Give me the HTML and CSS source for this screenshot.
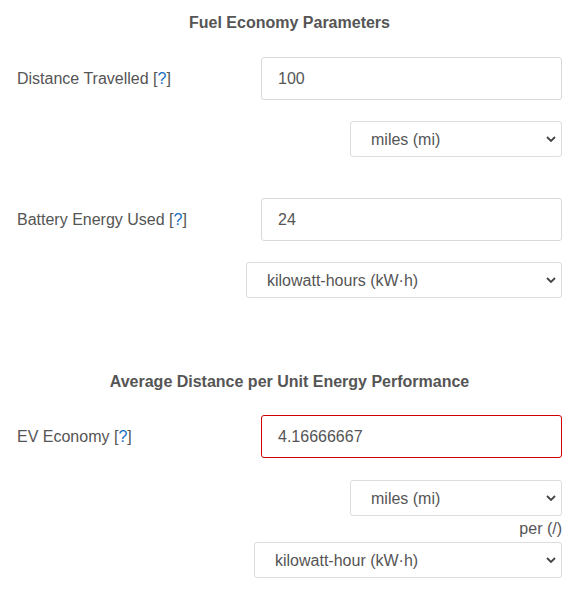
FILE: index.html
```html
<!DOCTYPE html>
<html>
<head>
<meta charset="utf-8">
<link rel="stylesheet" href="styles.css">
</head>
<body>
<div class="calc">
  <h3 class="section-title first">Fuel Economy Parameters</h3>
  <div class="row">
    <label class="label">Distance Travelled <span class="help">[<span class="q">?</span>]</span></label>
    <input class="field" type="text" value="100">
  </div>
  <div class="unit-row">
    <div class="select-wrap w-mi">
      <select class="unit"><option>miles (mi)</option></select>
      <svg class="chev" viewBox="0 0 10 6" width="10" height="6"><path d="M1 1 L5 5 L9 1" fill="none" stroke="#444" stroke-width="1.8"/></svg>
    </div>
  </div>

  <div class="row row-gap">
    <label class="label">Battery Energy Used <span class="help">[<span class="q">?</span>]</span></label>
    <input class="field" type="text" value="24">
  </div>
  <div class="unit-row">
    <div class="select-wrap w-kwhs">
      <select class="unit"><option>kilowatt-hours (kW·h)</option></select>
      <svg class="chev" viewBox="0 0 10 6" width="10" height="6"><path d="M1 1 L5 5 L9 1" fill="none" stroke="#444" stroke-width="1.8"/></svg>
    </div>
  </div>

  <h3 class="section-title second">Average Distance per Unit Energy Performance</h3>
  <div class="row">
    <label class="label">EV Economy <span class="help">[<span class="q">?</span>]</span></label>
    <input class="field result" type="text" value="4.16666667">
  </div>
  <div class="unit-row result-unit">
    <div class="select-wrap w-mi">
      <select class="unit"><option>miles (mi)</option></select>
      <svg class="chev" viewBox="0 0 10 6" width="10" height="6"><path d="M1 1 L5 5 L9 1" fill="none" stroke="#444" stroke-width="1.8"/></svg>
    </div>
  </div>
  <div class="per">per (/)</div>
  <div class="unit-row tight">
    <div class="select-wrap w-kwh">
      <select class="unit"><option>kilowatt-hour (kW·h)</option></select>
      <svg class="chev" viewBox="0 0 10 6" width="10" height="6"><path d="M1 1 L5 5 L9 1" fill="none" stroke="#444" stroke-width="1.8"/></svg>
    </div>
  </div>
</div>
</body>
</html>
```
FILE: styles.css
```css
html, body {
  margin: 0;
  padding: 0;
  background: #fff;
}
body {
  font-family: "Liberation Sans", Arial, sans-serif;
  font-size: 16px;
  color: #555;
}
.calc {
  padding: 0 17px;
  display: flex;
  flex-direction: column;
}
.section-title {
  margin: 0;
  font-size: 16px;
  font-weight: bold;
  text-align: center;
  color: #555;
  line-height: 18px;
}
.section-title.first {
  margin-top: 14px;
  margin-bottom: 25px;
}
.section-title.second {
  margin-top: 75px;
  margin-bottom: 24px;
}
.row {
  display: grid;
  grid-template-columns: 244px 1fr;
  align-items: center;
}
.row-gap {
  margin-top: 41px;
}
.label {
  color: #555;
  line-height: 20px;
}
.help .q {
  color: #1a6fc4;
}
.field {
  box-sizing: border-box;
  height: 43px;
  width: 100%;
  margin: 0;
  padding: 0 16px;
  border: 1px solid #d9d9d9;
  border-radius: 3px;
  font-family: inherit;
  font-size: 16px;
  color: #555;
  background: #fff;
  outline: none;
}
.field.result {
  border-color: #d20000;
}
.unit-row {
  display: flex;
  justify-content: flex-end;
  margin-top: 21px;
}
.unit-row.result-unit {
  margin-top: 22px;
}
.unit-row.tight {
  margin-top: 3px;
}
.select-wrap {
  position: relative;
}
.w-mi { width: 212px; }
.w-kwhs { width: 316px; }
.w-kwh { width: 308px; }
.unit {
  box-sizing: border-box;
  width: 100%;
  height: 36px;
  margin: 0;
  padding: 0 30px 0 20px;
  border: 1px solid #ddd;
  border-radius: 3px;
  font-family: inherit;
  font-size: 16px;
  color: #555;
  background: #fff;
  -webkit-appearance: none;
  appearance: none;
  outline: none;
}
.chev {
  position: absolute;
  right: 6px;
  top: 15px;
  pointer-events: none;
}
.per {
  text-align: right;
  margin-top: 3px;
  line-height: 20px;
}
```
